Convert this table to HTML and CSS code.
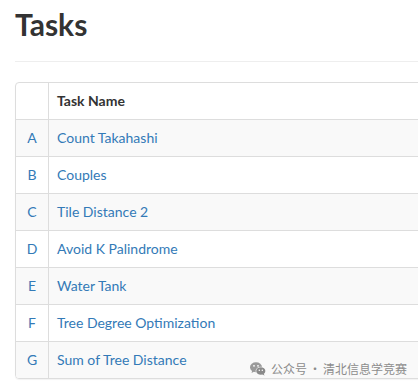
FILE: index.html
```html
<!DOCTYPE html>
<html>
<head>
<meta charset="utf-8">
<link rel="stylesheet" href="styles.css">
</head>
<body>
<div class="wrap">
  <div class="page-header">
    <h2 class="title">Tasks</h2>
  </div>
  <div class="panel">
    <table class="tasks">
      <thead>
        <tr><th class="idx"></th><th>Task Name</th></tr>
      </thead>
      <tbody>
        <tr><td class="idx"><a>A</a></td><td><a>Count Takahashi</a></td></tr>
        <tr><td class="idx"><a>B</a></td><td><a>Couples</a></td></tr>
        <tr><td class="idx"><a>C</a></td><td><a>Tile Distance 2</a></td></tr>
        <tr><td class="idx"><a>D</a></td><td><a>Avoid K Palindrome</a></td></tr>
        <tr><td class="idx"><a>E</a></td><td><a>Water Tank</a></td></tr>
        <tr><td class="idx"><a>F</a></td><td><a>Tree Degree Optimization</a></td></tr>
        <tr><td class="idx"><a>G</a></td><td><a>Sum of Tree Distance</a></td></tr>
      </tbody>
    </table>
  </div>
</div>
<div class="watermark">
  <svg class="wx" width="16" height="14" viewBox="0 0 16 14">
    <ellipse cx="6" cy="5.2" rx="6" ry="5" fill="#9a9a9a"/>
    <path d="M2.2 8.6 L1.6 11 L4.4 9.6 Z" fill="#9a9a9a"/>
    <ellipse cx="4" cy="3.8" rx="0.9" ry="0.9" fill="#fff"/>
    <ellipse cx="8" cy="3.8" rx="0.9" ry="0.9" fill="#fff"/>
    <ellipse cx="10.8" cy="9" rx="5.2" ry="4.3" fill="#fff"/>
    <ellipse cx="10.8" cy="9" rx="4.6" ry="3.8" fill="#8a8a8a"/>
    <path d="M13.6 11.8 L14.6 13.6 L12.2 12.4 Z" fill="#8a8a8a"/>
    <ellipse cx="9.3" cy="8.2" rx="0.75" ry="0.75" fill="#fff"/>
    <ellipse cx="12.3" cy="8.2" rx="0.75" ry="0.75" fill="#fff"/>
  </svg>
  <span class="wm-text">公众号<span class="dot">·</span>清北信息学竞赛</span>
</div>
</body>
</html>
```
FILE: styles.css
```css
html, body {
  margin: 0;
  padding: 0;
  background: #fff;
  overflow: hidden;
}
body {
  font-family: Lato, "Noto Sans", sans-serif;
  font-size: 14px;
  line-height: 20px;
  color: #333;
  width: 418px;
  height: 386px;
  position: relative;
}
.wrap {
  padding: 8px 0 0 15px;
  width: 700px;
}
.page-header {
  border-bottom: 1px solid #eee;
  padding-bottom: 20px;
  margin-bottom: 20px;
}
.title {
  margin: 0;
  font-size: 30px;
  line-height: 33px;
  font-weight: 700;
  color: #333;
}
.panel {
  border: 1px solid #ddd;
  border-radius: 4px;
  box-shadow: 0 1px 1px rgba(0,0,0,0.05);
  overflow: hidden;
  width: 600px;
}
.tasks {
  border-collapse: collapse;
  width: 100%;
}
.tasks th, .tasks td {
  padding: 8px;
  line-height: 20px;
  text-align: left;
  border-left: 1px solid #ddd;
  border-top: 1px solid #ddd;
}
.tasks th {
  border-top: none;
  font-weight: 700;
  color: #333;
}
.tasks .idx {
  border-left: none;
  width: 16px;
  text-align: center;
}
.tasks tbody tr:nth-child(odd) {
  background: #f9f9f9;
}
.tasks a {
  color: #337ab7;
  text-decoration: none;
}
.watermark {
  position: absolute;
  left: 250px;
  top: 360px;
  display: flex;
  align-items: center;
  gap: 5px;
  white-space: nowrap;
}
.wx {
  display: block;
}
.wm-text {
  font-family: "Noto Sans CJK SC", sans-serif;
  font-size: 12px;
  line-height: 17px;
  color: #8c8c8c;
  white-space: nowrap;
}
.dot {
  margin: 0 2px;
}
```
